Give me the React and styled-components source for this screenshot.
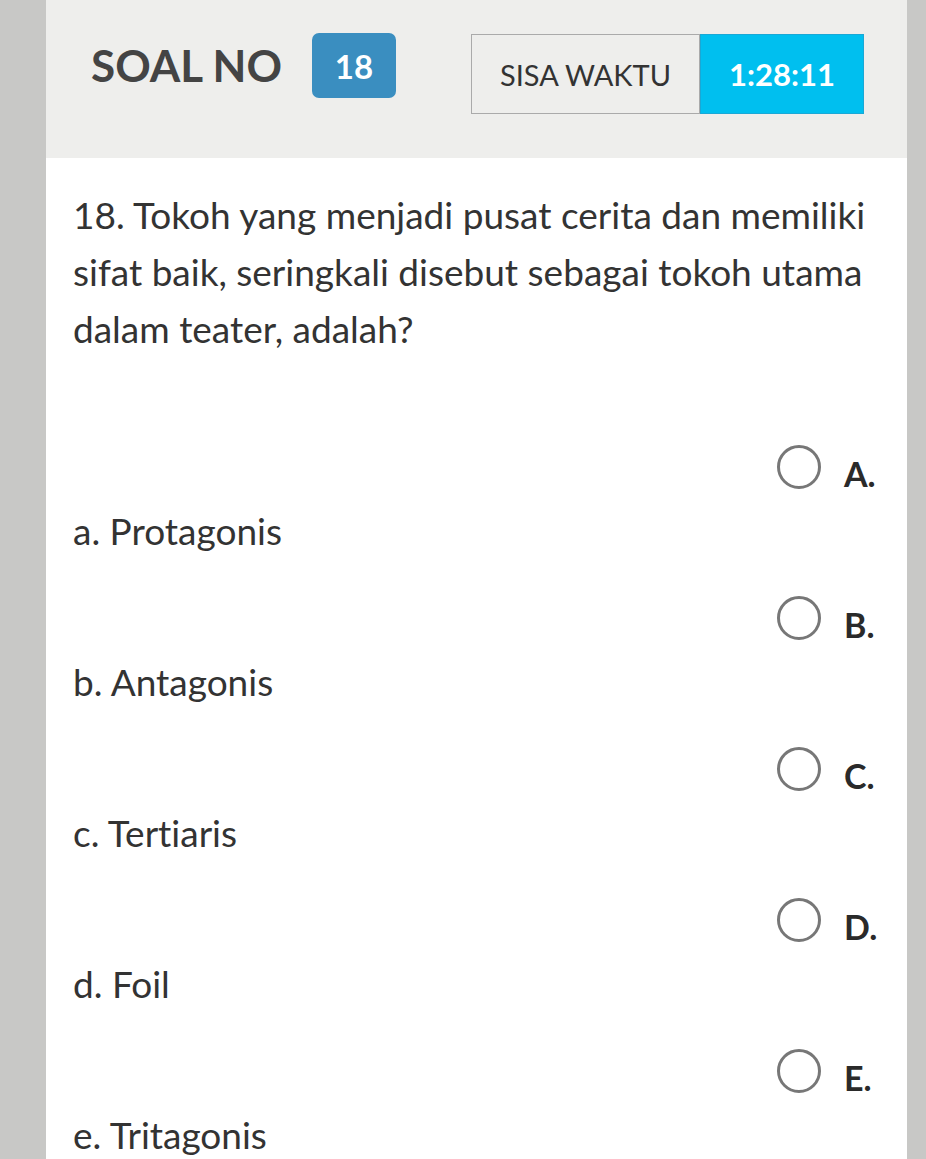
import React from "react";
import styled, { createGlobalStyle } from "styled-components";

const Global = createGlobalStyle`
  html, body { margin: 0; padding: 0; background: #c8c8c6; }
  body {
    font-family: Lato, "Noto Sans", sans-serif;
    font-variant-ligatures: none;
    font-feature-settings: "liga" 0, "dlig" 0;
  }
`;

const Page = styled.div`
  display: flex;
  padding-left: 46px;
  padding-right: 19px;
  min-height: 1159px;
`;

const Card = styled.div`
  flex: 1;
  background: #ffffff;
  display: flex;
  flex-direction: column;
`;

const Header = styled.div`
  height: 158px;
  background: #eeeeec;
  display: flex;
  align-items: flex-start;
  box-sizing: border-box;
  padding: 33px 43px 0 45px;
`;

const Title = styled.div`
  font-weight: 700;
  font-size: 44px;
  color: #444;
  line-height: 1;
  margin-top: 10px;
`;

const Badge = styled.div`
  margin-left: 30px;
  width: 84px;
  height: 65px;
  border-radius: 7px;
  background: #3a8ec0;
  color: #fff;
  font-weight: 700;
  font-size: 33px;
  display: flex;
  align-items: center;
  justify-content: center;
`;

const Timer = styled.div`
  margin-left: auto;
  margin-top: 1px;
  display: flex;
  height: 80px;
`;

const TimerLabel = styled.div`
  width: 229px;
  border: 1px solid #aaaaaa;
  background: #eeeeec;
  color: #333;
  font-size: 29px;
  display: flex;
  align-items: center;
  justify-content: center;
  box-sizing: border-box;
`;

const TimerValue = styled.div`
  width: 164px;
  background: #00bfef;
  border: 1px solid #1aa8d6;
  box-sizing: border-box;
  color: #fff;
  font-weight: 700;
  font-size: 31px;
  display: flex;
  align-items: center;
  justify-content: center;
`;

const Body = styled.div`
  padding: 28px 20px 0 27px;
`;

const Question = styled.p`
  margin: 0;
  font-size: 37px;
  line-height: 57px;
  color: #333;
`;

const Options = styled.div`
  margin-top: 86px;
  display: flex;
  flex-direction: column;
`;

const Option = styled.div`
  display: flex;
  flex-direction: column;
  height: 151px;
`;

const RadioRow = styled.label`
  display: flex;
  align-items: flex-start;
  justify-content: flex-end;
  gap: 23px;
  padding-right: 9px;
  height: 45px;
`;

const Radio = styled.span`
  width: 44px;
  height: 44px;
  box-sizing: border-box;
  border: 3px solid #777;
  border-radius: 50%;
  margin-top: 2px;
`;

const Letter = styled.span`
  font-weight: 700;
  font-size: 34px;
  line-height: 1;
  color: #2a2a2a;
  width: 34px;
  margin-top: 14px;
`;

const OptionText = styled.div`
  font-size: 37px;
  line-height: 1;
  color: #333;
  margin-top: 24px;
`;

const options = [
  ["A.", "a. Protagonis"],
  ["B.", "b. Antagonis"],
  ["C.", "c. Tertiaris"],
  ["D.", "d. Foil"],
  ["E.", "e. Tritagonis"],
];

export default function App() {
  return (
    <>
      <Global />
      <Page>
        <Card>
          <Header>
            <Title>SOAL NO</Title>
            <Badge>18</Badge>
            <Timer>
              <TimerLabel>SISA WAKTU</TimerLabel>
              <TimerValue>1:28:11</TimerValue>
            </Timer>
          </Header>
          <Body>
            <Question>
              18. Tokoh yang menjadi pusat cerita dan memiliki sifat baik,
              seringkali disebut sebagai tokoh utama dalam teater, adalah?
            </Question>
            <Options>
              {options.map(([l, t]) => (
                <Option key={l}>
                  <RadioRow>
                    <Radio />
                    <Letter>{l}</Letter>
                  </RadioRow>
                  <OptionText>{t}</OptionText>
                </Option>
              ))}
            </Options>
          </Body>
        </Card>
      </Page>
    </>
  );
}
